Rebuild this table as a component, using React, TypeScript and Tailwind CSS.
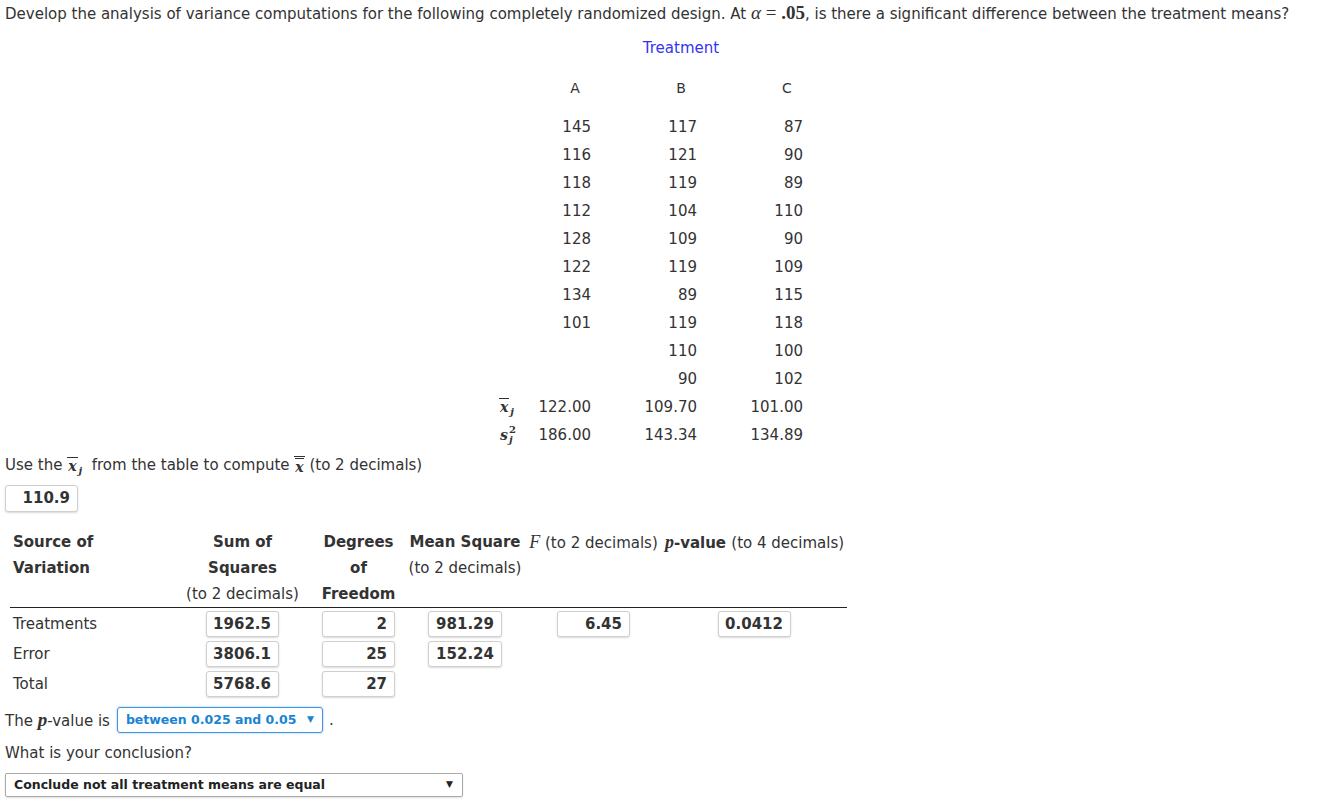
import React from "react";

const data: Array<Array<number | string>> = [
    [145, 117, 87],
    [116, 121, 90],
    [118, 119, 89],
    [112, 104, 110],
    [128, 109, 90],
    [122, 119, 109],
    [134, 89, 115],
    [101, 119, 118],
    ["", 110, 100],
    ["", 90, 102],
];

function XBar({ double = false }: { double?: boolean }) {
    return (
        <span className="inline-block font-['DejaVu_Serif',serif] italic font-bold text-[14px] leading-none">
            <span className="inline-block border-t-[1.5px] border-current pt-[1px] px-[1px]">
                {double ? <span className="inline-block border-t-[1.5px] border-current pt-[1px]">x</span> : "x"}
            </span>
        </span>
    );
}

function XBarJ() {
    return (
        <span className="inline-flex items-end">
            <XBar />
            <span className="font-['DejaVu_Serif',serif] italic font-bold text-[10px] leading-none ml-[1px] translate-y-[3px]">j</span>
        </span>
    );
}

function S2J() {
    return (
        <span className="inline-flex items-center font-['DejaVu_Serif',serif] italic font-bold">
            <span className="text-[14px] leading-none">s</span>
            <span className="inline-flex flex-col text-[10px] leading-[10px] ml-[1px]">
                <span className="not-italic">2</span>
                <span>j</span>
            </span>
        </span>
    );
}

function Box({ value, className = "" }: { value: string; className?: string }) {
    return (
        <div
            className={
                "h-[26px] w-[73px] border border-[#cfcfcf] rounded-[3px] shadow-[0_1px_2px_rgba(0,0,0,0.15)] bg-white flex items-center justify-end pr-[7px] font-bold text-[15px] text-[#333] " +
                className
            }
        >
            {value}
        </div>
    );
}

export default function App() {
    const anova = [
        { label: "Treatments", ss: "1962.5", df: "2", ms: "981.29", f: "6.45", p: "0.0412" },
        { label: "Error", ss: "3806.1", df: "25", ms: "152.24", f: "", p: "" },
        { label: "Total", ss: "5768.6", df: "27", ms: "", f: "", p: "" },
    ];

    return (
        <div className="w-[1330px] h-[802px] bg-white text-[#333] font-['DejaVu_Sans',Verdana,sans-serif] text-[15px] overflow-hidden">
            <div className="h-[26px] leading-[26px] pl-[5px] whitespace-nowrap">
                Develop the analysis of variance computations for the following completely randomized design. At{" "}
                <span className="font-['Liberation_Serif',serif] text-[19px]">
                    <i>α</i> = <b>.05</b>
                </span>
                , is there a significant difference between the treatment means?
            </div>

            {/* data table */}
            <div className="mt-[8px] w-[350px] mx-auto">
                <div className="grid grid-cols-[32px_318px] h-[28px] items-center">
                    <span />
                    <span className="text-center text-[#3535f0]">Treatment</span>
                </div>
                <div className="grid grid-cols-[32px_106px_106px_106px] h-[28px] items-center mt-[12px] text-[14px]">
                    <span />
                    <span className="text-center">A</span>
                    <span className="text-center">B</span>
                    <span className="text-center">C</span>
                </div>
                <div className="mt-[11px]">
                    {data.map((row, i) => (
                        <div key={i} className="grid grid-cols-[32px_106px_106px_106px] h-[28px] items-center">
                            <span />
                            {row.map((v, j) => (
                                <span key={j} className="text-right pr-[37px]">
                                    {v}
                                </span>
                            ))}
                        </div>
                    ))}
                    <div className="grid grid-cols-[32px_106px_106px_106px] h-[28px] items-center">
                        <span className="pl-[9px]">
                            <XBarJ />
                        </span>
                        <span className="text-right pr-[37px]">122.00</span>
                        <span className="text-right pr-[37px]">109.70</span>
                        <span className="text-right pr-[37px]">101.00</span>
                    </div>
                    <div className="grid grid-cols-[32px_106px_106px_106px] h-[28px] items-center">
                        <span className="pl-[10px]">
                            <S2J />
                        </span>
                        <span className="text-right pr-[37px]">186.00</span>
                        <span className="text-right pr-[37px]">143.34</span>
                        <span className="text-right pr-[37px]">134.89</span>
                    </div>
                </div>
            </div>

            <div className="mt-[3px] h-[26px] flex items-center pl-[5px] whitespace-nowrap">
                Use the&nbsp;<XBarJ />&nbsp;&nbsp;from the table to compute&nbsp;<XBar double />&nbsp;(to 2 decimals)
            </div>
            <div className="mt-[7px] pl-[5px]">
                <Box value="110.9" className="h-[27px]" />
            </div>

            {/* anova table */}
            <div className="mt-[17px] ml-[10px] w-[837px]">
                <div className="grid grid-cols-[170px_125px_107px_106px_151px_178px] border-b border-[#222] font-bold">
                    <div className="pl-[3px] leading-[26px]">
                        <div>Source of</div>
                        <div>Variation</div>
                    </div>
                    <div className="flex flex-col items-center leading-[26px]">
                        <div>Sum of</div>
                        <div>Squares</div>
                        <div className="font-normal whitespace-nowrap">(to 2 decimals)</div>
                    </div>
                    <div className="flex flex-col items-center leading-[26px]">
                        <div>Degrees</div>
                        <div>of</div>
                        <div>Freedom</div>
                    </div>
                    <div className="flex flex-col items-center leading-[26px] whitespace-nowrap">
                        <div>Mean Square</div>
                        <div className="font-normal">(to 2 decimals)</div>
                    </div>
                    <div className="flex flex-col items-center leading-[26px] whitespace-nowrap">
                        <div className="font-normal">
                            <span className="font-['Liberation_Serif',serif] italic text-[18px]">F</span> (to 2 decimals)
                        </div>
                    </div>
                    <div className="flex flex-col items-center leading-[26px] whitespace-nowrap pr-[7px]">
                        <div>
                            <span className="font-['Liberation_Serif',serif] italic text-[18px]">p</span>-value{" "}
                            <span className="font-normal">(to 4 decimals)</span>
                        </div>
                    </div>
                </div>
                <div className="pt-[3px]">
                    {anova.map((r) => (
                        <div key={r.label} className="grid grid-cols-[170px_125px_107px_106px_151px_178px] h-[30px] items-start">
                            <div className="pl-[3px] h-[26px] flex items-center">{r.label}</div>
                            <div className="flex justify-center">
                                <Box value={r.ss} />
                            </div>
                            <div className="flex justify-center">
                                <Box value={r.df} />
                            </div>
                            <div className="flex justify-center">{r.ms && <Box value={r.ms} className="w-[74px]" />}</div>
                            <div className="flex justify-center">{r.f && <Box value={r.f} />}</div>
                            <div className="flex justify-center pr-[7px]">{r.p && <Box value={r.p} />}</div>
                        </div>
                    ))}
                </div>
            </div>

            <div className="mt-[6px] pl-[5px] flex items-center h-[26px]">
                <span>
                    The <span className="font-['Liberation_Serif',serif] italic font-bold text-[19px]">p</span>-value is
                </span>
                <div className="ml-[7px] h-[26px] w-[206px] border border-[#3d92e0] rounded-[3px] shadow-[0_0_3px_rgba(61,146,224,0.45)] flex items-center justify-between pl-[8px] pr-[8px] text-[12.5px] font-bold text-[#1a84d3] whitespace-nowrap">
                    <span>between 0.025 and 0.05</span>
                    <span className="text-[9px]">▼</span>
                </div>
                <span className="ml-[6px]">.</span>
            </div>
            <div className="mt-[7px] pl-[5px] h-[26px] leading-[26px]">What is your conclusion?</div>
            <div className="mt-[7px] ml-[5px] h-[24px] w-[458px] border border-[#a9a9a9] rounded-[2px] shadow-[0_1px_2px_rgba(0,0,0,0.12)] flex items-center justify-between pl-[8px] pr-[9px] text-[12.5px] font-bold text-[#222]">
                <span>Conclude not all treatment means are equal</span>
                <span className="text-[9px]">▼</span>
            </div>
        </div>
    );
}
